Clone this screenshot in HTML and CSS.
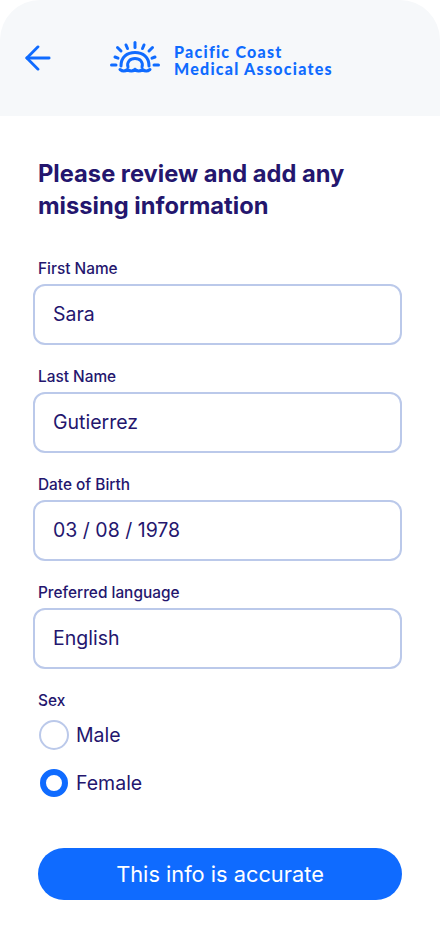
FILE: index.html
```html
<!DOCTYPE html>
<html lang="en">
<head>
    <meta charset="UTF-8">
    <meta name="viewport" content="width=device-width, initial-scale=1.0">
    <title>Review your information</title>
    <link rel="stylesheet" href="styles.css">
</head>
<body>
    <header class="top-bar">
        <svg class="back-icon" viewBox="0 0 28 28" fill="none" stroke="#0f6bff" stroke-width="3" stroke-linecap="round" stroke-linejoin="round">
            <path d="M2 14H26"/>
            <path d="M14 2L2 14L14 26"/>
        </svg>
        <svg class="logo-icon" viewBox="0 0 50 34" fill="none" stroke="#0f6bff" stroke-width="3" stroke-linecap="round">
            <path d="M25 1.500V6.500"/>
            <path d="M16 4L17.500 7.500"/>
            <path d="M34 4L32.500 7.500"/>
            <path d="M7.500 6.500L11 10"/>
            <path d="M42.500 6.500L39 10"/>
            <path d="M5 16L8 17.200"/>
            <path d="M45 16L42 17.200"/>
            <path d="M1.500 24H6"/>
            <path d="M44 24H48.500"/>
            <path d="M11 25C11 16 17 11.500 25 11.500C33 11.500 39 16 39 25"/>
            <path d="M18 26C16.500 21 20 17.500 25 17.500C30 17.500 33.500 21 32 26"/>
            <path d="M10 28.500C12.500 30.500 15 30.500 17.500 28.500C20 30.500 22.500 30.500 25 28.500C27.500 30.500 30 30.500 32.500 28.500C35 30.500 37.500 30.500 40 28.500"/>
        </svg>
        <div class="logo-text">Pacific Coast<br>Medical Associates</div>
    </header>

    <main class="form-wrap">
        <h1>Please review and add any missing information</h1>

        <div class="field">
            <label class="field-label">First Name</label>
            <div class="field-box">Sara</div>
        </div>
        <div class="field">
            <label class="field-label">Last Name</label>
            <div class="field-box">Gutierrez</div>
        </div>
        <div class="field">
            <label class="field-label">Date of Birth</label>
            <div class="field-box">03 / 08 / 1978</div>
        </div>
        <div class="field">
            <label class="field-label">Preferred language</label>
            <div class="field-box">English</div>
        </div>

        <div class="sex-group">
            <div class="field-label">Sex</div>
            <div class="radio-row"><span class="radio"></span>Male</div>
            <div class="radio-row"><span class="radio checked"></span>Female</div>
        </div>

        <button class="submit-btn">This info is accurate</button>
    </main>
</body>
</html>
```

FILE: styles.css
```css
body {
    margin: 0;
    background: white;
    font-family: Inter, "Noto Sans", sans-serif;
    color: #24166e;
}
.top-bar {
    height: 116px;
    background: #f6f8fa;
    border-radius: 40px 40px 0 0;
    display: flex;
    align-items: center;
    padding-left: 25px;
    box-sizing: border-box;
}
.back-icon {
    width: 26px;
    height: 26px;
    margin-right: 59px;
}
.logo-icon {
    width: 50px;
    height: 34px;
    margin-right: 14px;
}
.logo-text {
    margin-top: 4px;
    font-family: Lato, "Liberation Sans", sans-serif;
    font-weight: 900;
    font-size: 16px;
    letter-spacing: 1.250px;
    line-height: 17.500px;
    color: #0f6bff;
}
.form-wrap {
    padding: 42px 38px 0;
}
h1 {
    margin: 0 0 37px;
    font-size: 23.700px;
    line-height: 32px;
    font-weight: 700;
}
.field {
    margin-bottom: 22px;
}
.field-label {
    display: block;
    font-size: 15.400px;
    line-height: 20px;
    font-weight: 500;
}
.field-box {
    margin: 5px 0 0 -5.500px;
    width: 369px;
    height: 61px;
    box-sizing: border-box;
    border: 2px solid #bbc9ea;
    border-radius: 12px;
    padding: 0 0 2px 18.500px;
    display: flex;
    align-items: center;
    font-size: 19.500px;
}
.radio-row {
    display: flex;
    align-items: center;
    height: 48px;
    font-size: 19.500px;
    gap: 7px;
}
.radio {
    width: 30px;
    height: 30px;
    margin-left: 1px;
    box-sizing: border-box;
    border: 2px solid #bbc9ea;
    border-radius: 50%;
}
.radio.checked {
    width: 28px;
    height: 28px;
    margin: 0 1px 0 2px;
    border: 6px solid #0f6bff;
}
.submit-btn {
    display: block;
    margin-top: 41px;
    width: 364px;
    height: 52px;
    border: none;
    border-radius: 26px;
    background: #0f6bff;
    color: white;
    font-family: inherit;
    font-size: 21.800px;
    cursor: pointer;
}
```
